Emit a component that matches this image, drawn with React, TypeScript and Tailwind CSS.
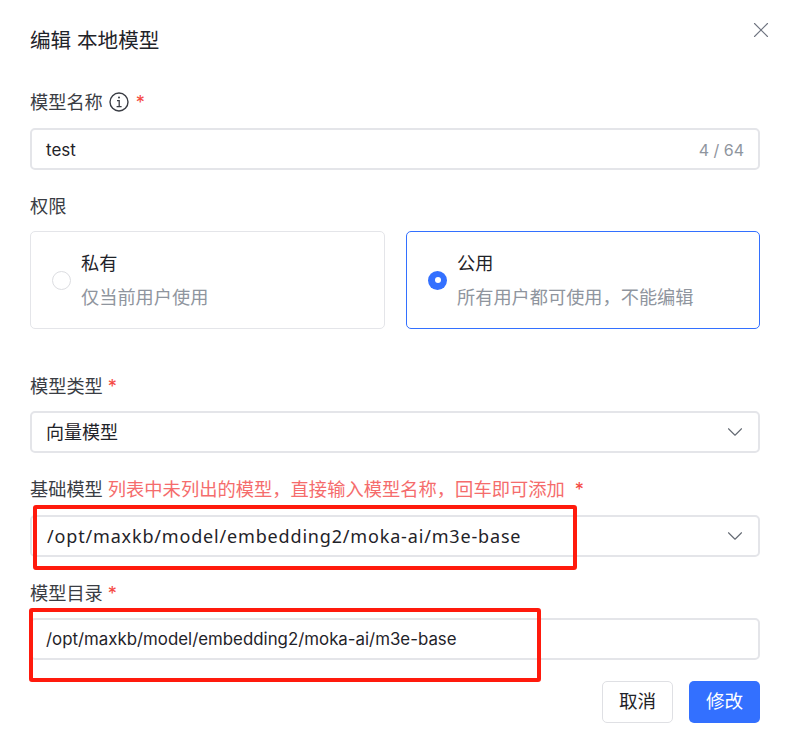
import { ChevronDown, X } from "lucide-react"

const CJK = "font-['Inter','Noto_Sans_CJK_SC',sans-serif]"

// circled "i" with a serif foot, the lucide one has a plain stem
function InfoIcon() {
  return (
    <svg viewBox="0 0 20 20" className="ml-[6px] size-[20px] text-[#3a3d44]" fill="none" stroke="currentColor">
      <circle cx="10" cy="10" r="9" strokeWidth="1.4" />
      <circle cx="10" cy="5.6" r="1" fill="currentColor" stroke="none" />
      <path d="M8 8.6h2.2v6M7.6 14.7h5" strokeWidth="1.3" />
    </svg>
  )
}

function Label({ text, required = true, info = false, className = "" }: { text: string; required?: boolean; info?: boolean; className?: string }) {
  return (
    <div className={`flex h-[24px] items-center text-[18.2px] leading-[24px] text-[#3a3d44] ${className}`}>
      <span>{text}</span>
      {info ? <InfoIcon /> : null}
      {required ? <span className={`${info ? "ml-[7px]" : "ml-[5px]"} text-[#f54a45]`}>*</span> : null}
    </div>
  )
}

function Field({ children, right }: { children: React.ReactNode; right?: React.ReactNode }) {
  return (
    <div className="flex h-[42px] items-center justify-between rounded-[5px] border-2 border-[#e4e5e9] bg-white px-[14px] text-[#1f2329]">
      {children}
      {right}
    </div>
  )
}

function Chevron() {
  return <ChevronDown className="-mr-[4px] size-[26px] text-[#646a73]" strokeWidth={1} />
}

function PermCard({ title, desc, active }: { title: string; desc: string; active?: boolean }) {
  return (
    <div className={`flex h-[98px] items-center rounded-[5px] border bg-white pl-[21px] ${active ? "border-[#3370ff]" : "border-[#e4e5e9]"}`}>
      {active ? (
        <span className="flex size-[19px] items-center justify-center rounded-full bg-[#3370ff]">
          <span className="size-[6px] rounded-full bg-white" />
        </span>
      ) : (
        <span className="size-[19px] rounded-full border border-[#dcdde1]" />
      )}
      <div className="ml-[10px]">
        <div className="text-[18.2px] leading-[24px] text-[#1f2329]">{title}</div>
        <div className="mt-[10px] text-[18.2px] leading-[24px] text-[#8f959e]">{desc}</div>
      </div>
    </div>
  )
}

export default function App() {
  return (
    <div className={`h-[750px] w-[792px] bg-white pl-[30px] pr-[32px] ${CJK}`}>
      <header className="relative pt-[28px]">
        <h2 className="text-[20.6px] leading-[26px] text-[#1f2329]">编辑 本地模型</h2>
        <X className="absolute right-[-14px] top-[17px] size-[26px] text-[#6f7480]" strokeWidth={1} />
      </header>

      <Label text="模型名称" info className="mt-[36px]" />
      <div className="mt-[14px]">
        <Field right={<span className="pt-[2px] text-[16px] text-[#8f959e]">4 / 64</span>}>
          <span className="pt-[3px] text-[17px]">test</span>
        </Field>
      </div>

      <Label text="权限" required={false} className="mt-[24px]" />
      <div className="mt-[13px] grid grid-cols-[355px_354px] gap-x-[21px]">
        <PermCard title="私有" desc="仅当前用户使用" />
        <PermCard title="公用" desc="所有用户都可使用，不能编辑" active />
      </div>

      <Label text="模型类型" className="mt-[45px]" />
      <div className="mt-[13px]">
        <Field right={<Chevron />}>
          <span className="text-[18px]">向量模型</span>
        </Field>
      </div>

      <div className="mt-[24px] flex h-[24px] items-center text-[18.2px] leading-[24px] text-[#3a3d44]">
        <span>基础模型</span>
        <span className="ml-[5px] text-[18.3px] text-[#f56c6c]">列表中未列出的模型，直接输入模型名称，回车即可添加</span>
        <span className="ml-[10px] text-[#f54a45]">*</span>
      </div>
      <div className="relative mt-[14px]">
        <Field right={<Chevron />}>
          <span className="pl-[1px] font-['Noto_Sans',sans-serif] text-[18px] tracking-[0.83px]">/opt/maxkb/model/embedding2/moka-ai/m3e-base</span>
        </Field>
        <div className="absolute left-[3px] top-[-10px] h-[65px] w-[544px] rounded-[3px] border-[4px] border-[#ff1a0d]" />
      </div>

      <Label text="模型目录" className="mt-[24px]" />
      <div className="relative mt-[13px]">
        <Field>
          <span className="pt-[2px] text-[16.85px]">/opt/maxkb/model/embedding2/moka-ai/m3e-base</span>
        </Field>
        <div className="absolute left-[-1px] top-[-10px] h-[74px] w-[512px] rounded-[3px] border-[4px] border-[#ff1a0d]" />
      </div>

      <footer className="mt-[21px] flex justify-end gap-[16px]">
        <button type="button" className="h-[42px] w-[71px] rounded-[5px] border border-[#dfe0e4] bg-white text-[18.6px] text-[#1f2329]">取消</button>
        <button type="button" className="h-[42px] w-[71px] rounded-[5px] bg-[#3370ff] text-[18.6px] text-white">修改</button>
      </footer>
    </div>
  )
}
